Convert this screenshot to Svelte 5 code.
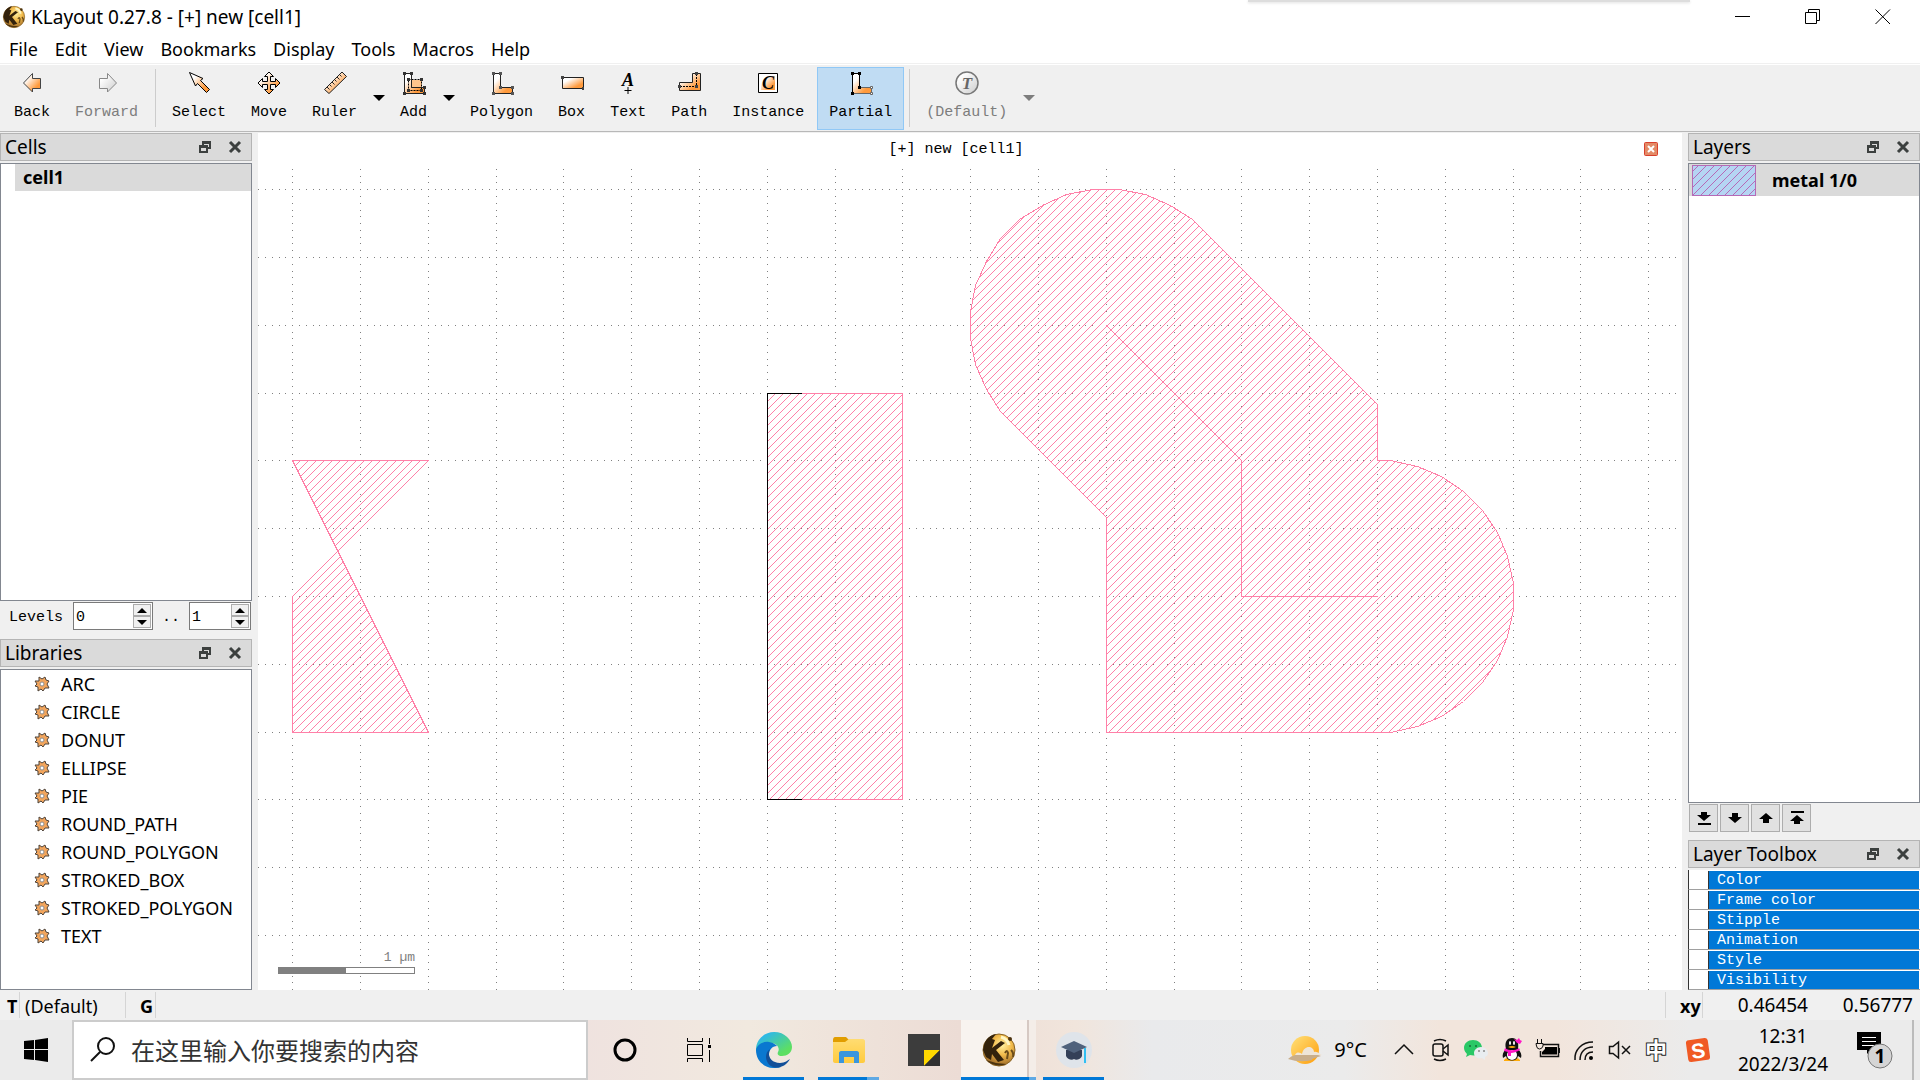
<script>
    const menus = ["File", "Edit", "View", "Bookmarks", "Display", "Tools", "Macros", "Help"];

    const tools = [
        { id: "back", label: "Back" },
        { id: "forward", label: "Forward", disabled: true, separator: true },
        { id: "select", label: "Select" },
        { id: "move", label: "Move" },
        { id: "ruler", label: "Ruler", menu: true },
        { id: "add", label: "Add", menu: true },
        { id: "polygon", label: "Polygon" },
        { id: "box", label: "Box" },
        { id: "text", label: "Text" },
        { id: "path", label: "Path" },
        { id: "instance", label: "Instance" },
        { id: "partial", label: "Partial", active: true, separator: true },
        { id: "technology", label: "(Default)", disabled: true, menu: true },
    ];

    const libraries = [
        "ARC", "CIRCLE", "DONUT", "ELLIPSE", "PIE", "ROUND_PATH",
        "ROUND_POLYGON", "STROKED_BOX", "STROKED_POLYGON", "TEXT",
    ];

    const toolboxSections = ["Color", "Frame color", "Stipple", "Animation", "Style", "Visibility"];
    const layerMoves = ["bottom", "down", "up", "top"];

    const apps = [
        { id: "edge", label: "Microsoft Edge", state: "running" },
        { id: "explorer", label: "File Explorer", state: "running stacked" },
        { id: "notes", label: "Sticky Notes", state: "" },
        { id: "klayout", label: "KLayout", state: "running stacked current" },
        { id: "study", label: "Study", state: "running" },
    ];
    const tray = ["chevron", "camera", "wechat", "qq", "battery", "wifi", "volume", "ime", "sogou"];

    let levelFrom = "0";
    let levelTo = "1";
    let search = "";

    // canvas: one grid unit is 0.5 µm
    let viewWidth = 1424;
    let viewHeight = 826;
    const unit = 67.8;
    const originX = 34.2;
    const originY = 25.2;

    const gx = n => Math.round(originX + n * unit);
    const gy = n => Math.round(originY + n * unit);
    const toPath = points => points.map(([x, y], i) => `${i ? "L" : "M"}${gx(x) + 0.5} ${gy(y) + 0.5}`).join("");

    function gridDots(width, height) {
        let d = "";
        for (let x = gx(0), n = 0; x < width; x = gx(++n)) {
            for (let k = -3; gy(k / 10) < height; k++) d += `M${x} ${gy(k / 10)}h1v1h-1z`;
        }
        for (let y = gy(0), n = 0; y < height; y = gy(++n)) {
            for (let k = -5; gx(k / 10) < width - 4; k++) d += `M${gx(k / 10)} ${y}h1v1h-1z`;
        }
        return d;
    }

    // round path ends are drawn as halves of a 32 sided polygon
    function cap(cx, cy, start) {
        const step = Math.PI / 16;
        const radius = 2 / Math.cos(step / 2);
        return Array.from({ length: 16 }, (_, i) => {
            const a = start + (i + 0.5) * step;
            return [cx + radius * Math.cos(a), cy + radius * Math.sin(a)];
        });
    }

    const bowtie = toPath([[0, 4], [2, 4], [0, 6], [0, 8], [2, 8]]) + "z";
    const bar = toPath([[7, 3], [9, 3], [9, 9], [7, 9]]) + "z";
    const selection = toPath([[7.5, 3], [7, 3], [7, 9], [7.5, 9]]);
    const wire = toPath([
        ...cap(12, 2, Math.PI * 0.75),
        [16, 3.17], [16, 4],
        ...cap(16, 6, -Math.PI / 2),
        [12, 8], [12, 4.83],
    ]) + "z";
    const spine = toPath([[12, 2], [14, 4], [14, 6], [16, 6]]);

    $: dots = gridDots(viewWidth, viewHeight);
</script>

{#snippet toolIcon(id)}
    <svg class="tool-icon" viewBox="0 0 24 24" aria-hidden="true">
        {#if id === "back"}
            <path d="M3.5 12L12.5 2.5V7.5H20.5V17.5H12.5V21z" fill="url(#orange)" stroke="#444" />
        {:else if id === "forward"}
            <path d="M21.5 12L12.5 2.5V7.5H4.5V17.5H12.5V21z" fill="url(#grey)" stroke="#888" />
        {:else if id === "select"}
            <path d="M2.5 1.5L16 7.5L13.5 9.5L22.5 18.5L19.5 21.5L10.5 12.5L8.5 15z" fill="url(#orange)" stroke="#000" />
        {:else if id === "move"}
            <path d="M12 1L16.5 5.5H13.5V10.5H18.5V7.5L23 12L18.5 16.5V13.5H13.5V18.5H16.5L12 23L7.5 18.5H10.5V13.5H5.5V16.5L1 12L5.5 7.5V10.5H10.5V5.5H7.5z" fill="url(#orange)" stroke="#000" />
        {:else if id === "ruler"}
            <path d="M1.5 18.5L19 1L23.5 5.5L6 22.5z" fill="url(#orange)" stroke="#222" />
            <path d="M4 16l2.500 2.500M6.500 13.500l2 2M9 11l2.500 2.500M11.500 8.500l2 2M14 6l2.500 2.500M16.500 3.500l2 2" stroke="#222" />
        {:else if id === "add"}
            <path d="M2.500 2.500H9.500V16.500H22.500V22.500H2.500z" fill="url(#orange)" stroke="#222" />
            <path d="M10 9H20V17H10z" fill="#ffc58c" />
            <path d="M6.500 8.500H19.500V19.500H6.500z" fill="none" stroke="#000" stroke-dasharray="2 1" />
            <path d="M9.500 3V16.500H22" fill="none" stroke="#222" />
            <path d="M1 1h3v3h-3zM8 1h3v3h-3zM21 15h3v3h-3zM21 21h3v3h-3zM1 21h3v3h-3zM5 7h3v3h-3zM18 7h3v3h-3zM5 18h3v3h-3zM18 18h3v3h-3z" fill="#333" />
        {:else if id === "polygon"}
            <path d="M3.500 2.500H10.500V16.500H22.500V22.500H3.500z" fill="url(#orange)" stroke="#222" />
            <path d="M2 1h3v3h-3zM9 1h3v3h-3zM9 15h3v3h-3zM21 15h3v3h-3zM21 21h3v3h-3zM2 21h3v3h-3z" fill="#555" />
        {:else if id === "box"}
            <path d="M2.500 6.500H23.500V17.500H2.500z" fill="url(#orange)" stroke="#222" />
            <path d="M1 5h3v3h-3zM22 16h2v3h-2z" fill="#444" />
        {:else if id === "text"}
            <text class="glyph" x="12" y="15" font-size="18">A</text>
            <path d="M8.500 19.500H15.500M12 16V23" stroke="#000" />
        {:else if id === "path"}
            <path d="M2.500 11.500H15.500V2.500H23.500V19.500H2.500z" fill="url(#orange)" stroke="#222" />
            <path d="M3 15.500H19.500V3" fill="none" stroke="#000" stroke-dasharray="2 1" />
            <path d="M1 14h3v3h-3zM18 14h3v3h-3zM18 1h3v3h-3z" fill="#444" />
        {:else if id === "instance"}
            <path d="M2.500 2.500H21.500V21.500H2.500z" fill="#fff" stroke="#000" />
            <path d="M5 5H19V19H5z" fill="url(#orange)" />
            <text class="glyph" x="12" y="18" font-size="18">C</text>
        {:else if id === "partial"}
            <path d="M3.500 2.500H10.500V16.500H22.500V22.500H3.500z" fill="url(#orange)" stroke="#666" />
            <path d="M3.500 22V2.500H10.500V16.500" fill="none" stroke="#000" />
            <path d="M2 1h3v3h-3zM9 1h3v3h-3zM9 15h3v3h-3zM2 21h3v3h-3z" fill="#000" />
            <path d="M21.500 15.500h2v2h-2zM21.500 21.500h2v2h-2z" fill="#fff" stroke="#666" />
        {:else}
            <circle cx="12" cy="12" r="11" fill="url(#grey)" stroke="#777" stroke-width="1.500" />
            <text class="glyph muted" x="12" y="18" font-size="17">T</text>
        {/if}
    </svg>
{/snippet}

{#snippet klayoutIcon()}
    <svg class="logo" viewBox="0 0 36 36" aria-hidden="true">
        <circle cx="18" cy="18" r="16" fill="url(#gold)" stroke="#8a6424" />
        <path d="M3 13C5 6 10 3 15 2L11 7L14 8L11 16L20 9L24 11L15 18L23 28L17 30L11 22L10 28L5 25L2 18z" fill="#33220c" />
        <path d="M5 28C10 33 18 35 25 32L15 31z" fill="#4c330f" />
        <path d="M24 21Q26 17 27 21L26 27M30 18Q33 21 32 25" fill="none" stroke="#6b4c1a" stroke-width="2" />
        <circle cx="29" cy="7" r="2" fill="#4c330f" />
        <path d="M20 5C24 6 27 9 28 13" fill="none" stroke="#fff6c4" stroke-width="3" />
    </svg>
{/snippet}

{#snippet dockTitle(title)}
    <header class="dock-title">
        <h2>{title}</h2>
        <button type="button" aria-label="Float {title}">
            <svg viewBox="0 0 14 14" width="14" height="14">
                <path d="M5 5V2H12V8H9M5 3H12M2 6H9V12H2zM2 7H9" fill="none" stroke="#3c403f" stroke-width="2" />
            </svg>
        </button>
        <button type="button" aria-label="Close {title}">
            <svg viewBox="0 0 14 14" width="14" height="14">
                <path d="M2 2L12 12M12 2L2 12" stroke="#3c403f" stroke-width="3" />
            </svg>
        </button>
    </header>
{/snippet}

{#snippet appIcon(id)}
    {#if id === "klayout"}
        {@render klayoutIcon()}
    {:else}
        <svg viewBox="0 0 36 36" width="36" height="36" aria-hidden="true">
            {#if id === "edge"}
                <path d="M0 20C-1 8 8 0 18 0C29 0 36 8 36 15C36 21 31 24 26 24C22 24 21 22 22 20C24 17 22 11 14 11C7 11 2 15 0 20z" fill="url(#edgeTop)" />
                <path d="M0 18C1 12 8 9 13 10C19 11 21 14 21 14C16 14 13 18 13 23C13 30 20 34 25 35C12 39 0 31 0 18z" fill="#0a78d0" />
                <path d="M14 17C11 23 14 31 24 31C29 31 32 28 34 27C30 34 23 37 17 35C10 33 7 22 14 17z" fill="#124f98" />
            {:else if id === "explorer"}
                <path d="M2 8C2 6 3 5 4 5H15L18 8L15 11H2z" fill="#e19d00" />
                <path d="M2 10H14L18 7H32C33 7 34 8 34 9V29C34 30 33 31 32 31H4C3 31 2 30 2 29z" fill="url(#folder)" />
                <path d="M8 31V21C8 20 9 19 10 19H26C27 19 28 20 28 21V31H23V25H13V31z" fill="#3a96dd" />
            {:else if id === "notes"}
                <path d="M2 2H34V34H2z" fill="#3c3c3c" />
                <path d="M18 18H34L18 34z" fill="#ffd800" />
                <path d="M34 18V34H18z" fill="#303030" />
            {:else}
                <circle cx="18" cy="18" r="18" fill="#dfe4ea" />
                <path d="M10 18H26V24C25 27 20 29 18 27C16 29 11 27 10 24z" fill="#344058" />
                <path d="M5 15L18 9L31 15L18 21z" fill="#50627c" />
                <path d="M29 16V31" stroke="#31bff2" stroke-width="2" />
            {/if}
        </svg>
    {/if}
{/snippet}

{#snippet trayIcon(id)}
    <svg viewBox="0 0 24 24" width="24" height="24" fill="none" stroke="#111" aria-hidden="true">
        {#if id === "chevron"}
            <path d="M3 16L12 7L21 16" stroke-width="1.500" />
        {:else if id === "camera"}
            <path d="M6 3Q12 0 18 3M6 21Q12 24 18 21" stroke-width="1.500" />
            <rect x="5" y="6" width="10" height="12" rx="2" stroke-width="1.500" />
            <path d="M15 11L20 7V17L15 13" stroke-width="1.500" />
        {:else if id === "wechat"}
            <g stroke="none">
                <path d="M9 2C4 2 0 5 0 10C0 13 2 15 3 16L2 19L6 17C14 19 18 14 18 10C18 5 14 2 9 2z" fill="#2ac866" />
                <circle cx="6" cy="8" r="1" fill="#176c38" />
                <circle cx="12" cy="8" r="1" fill="#176c38" />
                <path d="M17 9C13 9 10 12 10 15C10 19 14 21 18 20L21 22V19C23 18 24 17 24 15C24 12 21 9 17 9z" fill="#e9edf0" />
                <circle cx="15" cy="13" r="1" fill="#888" />
                <circle cx="20" cy="13" r="1" fill="#888" />
            </g>
        {:else if id === "qq"}
            <g stroke="none">
                <path d="M4 22Q7 18 12 22Q17 18 20 22V23H4z" fill="#ffac0b" />
                <path d="M6 11C4 3 8 0 12 0C17 0 19 4 18 11C21 14 22 17 21 20L18 18C17 24 7 24 6 18L3 20C2 17 3 14 6 11z" fill="#111" />
                <ellipse cx="12" cy="17" rx="5" ry="5" fill="#fff" />
                <path d="M5 10C9 13 15 13 19 10L20 12C17 14 13 15 11 15V18H8V14L4 13z" fill="#ff16c5" />
                <path d="M14 1L17 2L19 0L20 2L22 3L20 6L17 5z" fill="#ff16c5" />
                <ellipse cx="10" cy="5" rx="1" ry="2" fill="#fff" />
                <ellipse cx="14" cy="5" rx="1" ry="2" fill="#fff" />
                <path d="M8 9Q12 7 16 9Q12 11 8 9" fill="#ffac0b" />
            </g>
        {:else if id === "battery"}
            <path d="M7 6.500H22.500V18.500H4.500V13" stroke-width="1.500" />
            <path d="M9 9H21V16.500H6V14L9 11z" fill="#000" stroke="none" />
            <path d="M23.500 10V15M1.500 1V5M5.500 1V5M0 5.500H7V8Q6 11 3.500 11Q1 11 .500 8z" />
        {:else if id === "wifi"}
            <path d="M3 22C2 12 10 4 21 4M8 22C8 14 13 9 21 9M13 22C13 17 16 14 21 14" stroke-width="1.500" />
            <circle cx="19" cy="20" r="2" fill="#000" stroke="none" />
        {:else if id === "volume"}
            <path d="M1.500 8.500H5L10.500 4V20L5 15.500H1.500zM14 8L22 16M22 8L14 16" stroke-width="1.500" />
        {:else if id === "ime"}
            <text class="ime" x="12" y="20">中</text>
        {:else}
            <g transform="rotate(-8 12 12)">
                <rect x="1" y="1" width="22" height="22" rx="3" fill="#f05a24" stroke="none" />
                <text class="sogou" x="12" y="20">S</text>
            </g>
        {/if}
    </svg>
{/snippet}

<div class="desktop">
    <div class="popup-edge"></div>
    <header class="title-bar">
        {@render klayoutIcon()}
        <h1>KLayout 0.27.8 - [+] new [cell1]</h1>
        <div class="window-buttons">
            <button type="button" aria-label="Minimize">
                <svg viewBox="0 0 16 16" width="16" height="16"><path d="M0 7.500H15" stroke="#000" /></svg>
            </button>
            <button type="button" aria-label="Restore">
                <svg viewBox="0 0 16 16" width="16" height="16" fill="none" stroke="#000"><path d="M.500 3.500H11.500V14.500H.500zM3.500 3V.500H14.500V11.500H12" /></svg>
            </button>
            <button type="button" aria-label="Close">
                <svg viewBox="0 0 16 16" width="16" height="16"><path d="M.500 .500L15 15M15 .500L.500 15" stroke="#000" /></svg>
            </button>
        </div>
    </header>

    <nav class="menu-bar">
        {#each menus as menu}
            <button type="button">{menu}</button>
        {/each}
    </nav>

    <div class="tool-bar">
        {#each tools as tool}
            <button type="button" class="tool" class:active={tool.active} disabled={tool.disabled}>
                {@render toolIcon(tool.id)}
                <span>{tool.label}</span>
            </button>
            {#if tool.menu}
                <button type="button" class="tool-menu" aria-label="{tool.label} options" disabled={tool.disabled}>
                    <svg viewBox="0 0 12 6" width="12" height="6"><path d="M0 0H12L6 6z" fill="currentColor" /></svg>
                </button>
            {/if}
            {#if tool.separator}
                <i class="separator"></i>
            {/if}
        {/each}
    </div>

    <div class="workspace">
        <aside class="left-docks">
            <section class="cells">
                {@render dockTitle("Cells")}
                <ul class="tree">
                    <li class="cell">cell1</li>
                </ul>
                <div class="levels">
                    <label for="level-from">Levels</label>
                    <div class="spin wide">
                        <input id="level-from" bind:value={levelFrom} />
                        <div class="steps">
                            <button type="button" aria-label="Raise first level"><svg viewBox="0 0 10 5" width="10" height="5"><path d="M0 5H10L5 0z" /></svg></button>
                            <button type="button" aria-label="Lower first level"><svg viewBox="0 0 10 5" width="10" height="5"><path d="M0 0H10L5 5z" /></svg></button>
                        </div>
                    </div>
                    <span class="range">..</span>
                    <div class="spin">
                        <input aria-label="Last level" bind:value={levelTo} />
                        <div class="steps">
                            <button type="button" aria-label="Raise last level"><svg viewBox="0 0 10 5" width="10" height="5"><path d="M0 5H10L5 0z" /></svg></button>
                            <button type="button" aria-label="Lower last level"><svg viewBox="0 0 10 5" width="10" height="5"><path d="M0 0H10L5 5z" /></svg></button>
                        </div>
                    </div>
                </div>
            </section>
            <section class="libraries">
                {@render dockTitle("Libraries")}
                <ul class="tree">
                    {#each libraries as library}
                        <li class="library">
                            <svg viewBox="0 0 16 16" width="16" height="16" aria-hidden="true">
                                <path d="M5 1L8 3L11 1L12 4L15 5L13 8L15 12L11 12L9 15L7 13L4 15L4 11L1 10L3 8L1 5L5 5z" fill="#f2a55c" stroke="#4e443b" />
                                <circle cx="8" cy="8" r="2" fill="#fff" stroke="#8d8d8d" />
                            </svg>
                            {library}
                        </li>
                    {/each}
                </ul>
            </section>
        </aside>

        <main class="view">
            <div class="tab">
                <span>[+] new [cell1]</span>
                <button type="button" aria-label="Close tab">
                    <svg viewBox="0 0 14 14" width="14" height="14">
                        <rect x=".500" y=".500" width="13" height="13" rx="1" fill="#e38a66" stroke="#d8402c" />
                        <path d="M4 4L10 10M10 4L4 10" stroke="#fff" stroke-width="2" />
                    </svg>
                </button>
            </div>
            <div class="canvas" bind:clientWidth={viewWidth} bind:clientHeight={viewHeight}>
                <svg width="100%" height="100%" shape-rendering="crispEdges">
                    <defs>
                        <pattern id="hatch" width="8" height="8" patternUnits="userSpaceOnUse">
                            <path d="M2 0h1v1h-1zM1 1h1v1h-1zM0 2h1v1h-1zM7 3h1v1h-1zM6 4h1v1h-1zM5 5h1v1h-1zM4 6h1v1h-1zM3 7h1v1h-1z" fill="#ff80a8" />
                        </pattern>
                        <linearGradient id="orange" x1="0" y1="0" x2="1" y2="1">
                            <stop offset=".25" stop-color="#fff" />
                            <stop offset=".75" stop-color="#ff9a3c" />
                        </linearGradient>
                        <linearGradient id="grey" x1="0" y1="0" x2="1" y2="1">
                            <stop offset=".2" stop-color="#fff" />
                            <stop offset="1" stop-color="#ccc" />
                        </linearGradient>
                        <radialGradient id="gold" cx=".6" cy=".35" r=".6">
                            <stop offset="0" stop-color="#fff0a0" />
                            <stop offset=".5" stop-color="#f2bb4c" />
                            <stop offset="1" stop-color="#a8742c" />
                        </radialGradient>
                        <linearGradient id="edgeTop" x1="0" y1="0" x2="1" y2="1">
                            <stop offset=".2" stop-color="#2fb9e5" />
                            <stop offset=".8" stop-color="#5ddf62" />
                        </linearGradient>
                        <linearGradient id="folder" x1="0" y1="0" x2="0" y2="1">
                            <stop offset="0" stop-color="#ffdc72" />
                            <stop offset="1" stop-color="#ffcb3e" />
                        </linearGradient>
                        <linearGradient id="sun" x1="0" y1="0" x2="1" y2="1">
                            <stop offset="0" stop-color="#ffe17a" />
                            <stop offset="1" stop-color="#ff9d0a" />
                        </linearGradient>
                    </defs>
                    <path d={dots} fill="#808080" />
                    <g fill="url(#hatch)" stroke="#ff80a8">
                        <path d={bowtie} />
                        <path d={bar} />
                        <path d={wire} />
                        <path d={spine} fill="none" />
                    </g>
                    <path d={selection} fill="none" stroke="#000" />
                </svg>
                <div class="scale">
                    <span>1 µm</span>
                    <div class="scale-bar"></div>
                </div>
            </div>
        </main>

        <aside class="right-docks">
            <section class="layers">
                {@render dockTitle("Layers")}
                <ul class="tree">
                    <li class="layer">
                        <svg viewBox="0 0 64 31" width="64" height="31" shape-rendering="crispEdges">
                            <path d="M.500 .500H63.500V30.500H.500z" fill="#b5d5f3" stroke="#b56ab6" />
                            <path d="M1 6L6 1M1 14L14 1M1 22L22 1M1 30L30 1M8 31L38 1M16 31L46 1M24 31L54 1M32 31L62 1M40 31L63 8M48 31L63 16M56 31L63 24" stroke="#b56ab6" />
                        </svg>
                        metal 1/0
                    </li>
                </ul>
                <div class="layer-moves">
                    {#each layerMoves as move}
                        <button type="button" aria-label="Move layer {move}">
                            <svg viewBox="0 0 14 14" width="14" height="14">
                                {#if move === "bottom"}
                                    <path d="M4 1H10V4H14L7 10L0 4H4zM1 12H14V14H1z" />
                                {:else if move === "down"}
                                    <path d="M4 2H10V6H14L7 12L0 6H4z" />
                                {:else if move === "up"}
                                    <path d="M4 12H10V8H14L7 2L0 8H4z" />
                                {:else}
                                    <path d="M4 13H10V10H14L7 4L0 10H4zM1 0H14V2H1z" />
                                {/if}
                            </svg>
                        </button>
                    {/each}
                </div>
            </section>
            <section class="toolbox">
                {@render dockTitle("Layer Toolbox")}
                {#each toolboxSections as section}
                    <button type="button" class="toolbox-section"><span>{section}</span></button>
                {/each}
            </section>
        </aside>
    </div>

    <footer class="status-bar">
        <b class="technology">T</b>
        <span class="technology-name">(Default)</span>
        <b class="grid-flag">G</b>
        <b class="xy">xy</b>
        <span class="coordinate">0.46454</span>
        <span class="coordinate">0.56777</span>
    </footer>

    <div class="task-bar">
        <button type="button" class="start" aria-label="Start">
            <svg viewBox="0 0 24 24" width="24" height="24"><path d="M0 3L10 2V11H0zM11 2L24 0V11H11zM0 12H10V22L0 21zM11 12H24V24L11 22z" /></svg>
        </button>
        <label class="search">
            <svg viewBox="0 0 26 26" width="26" height="26" fill="none" stroke="#111" stroke-width="2">
                <circle cx="16" cy="9" r="8" />
                <path d="M10 15L1 24" />
            </svg>
            <input type="text" aria-label="Search" placeholder="在这里输入你要搜索的内容" bind:value={search} />
        </label>
        <button type="button" class="shell-button" aria-label="Cortana">
            <svg viewBox="0 0 26 26" width="26" height="26"><circle cx="13" cy="13" r="10" fill="none" stroke="#000" stroke-width="3" /></svg>
        </button>
        <button type="button" class="shell-button" aria-label="Task view">
            <svg viewBox="0 0 26 26" width="26" height="26" fill="none" stroke="#000">
                <path d="M1.500 1V4.500H16.500V1M1.500 25V21.500H16.500V25M1.500 7.500H16.500V18.500H1.500zM23.500 1V7M23.500 13V25" />
                <path d="M22 8H25V11H22z" fill="#000" stroke="none" />
            </svg>
        </button>
        {#each apps as app}
            <button type="button" class="app {app.state}" aria-label={app.label}>{@render appIcon(app.id)}</button>
        {/each}

        <div class="tray">
            <button type="button" class="weather">
                <svg viewBox="0 0 34 30" width="34" height="30" aria-hidden="true">
                    <circle cx="17" cy="15" r="14" fill="url(#sun)" />
                    <path d="M7 20C9 16 13 18 14 19C16 9 26 11 26 17C30 16 31 19 34 20Q26 22 19 21Q8 22 7 20z" fill="#eee5d8" />
                    <path d="M0 24Q3 21 7 20H30L33 21Q22 24 24 25Q12 28 0 24z" fill="#c8ae8c" />
                </svg>
                9°C
            </button>
            {#each tray as item}
                <button type="button" class="tray-button {item}" aria-label={item}>{@render trayIcon(item)}</button>
            {/each}
            <button type="button" class="clock">
                <span>12:31</span>
                <span>2022/3/24</span>
            </button>
            <button type="button" class="notifications" aria-label="Notifications">
                <svg viewBox="0 0 40 40" width="40" height="40">
                    <path d="M2 2H26V20H16L12 24V20H2z" />
                    <path d="M7 7.500H21M7 11.500H21M7 15.500H21" stroke="#fff" />
                    <circle cx="25" cy="26" r="12" fill="#d5d5d5" stroke="#777" />
                    <text x="25" y="33">1</text>
                </svg>
            </button>
        </div>
    </div>
</div>

<style>
    :global(body) {
        margin: 0;
    }

    .desktop {
        position: relative;
        display: flex;
        flex-direction: column;
        height: 100vh;
        background: #f0f0f0;
        color: #000;
        font: 18px/28px "Noto Sans", "Noto Sans CJK SC", sans-serif;
        overflow: hidden;
    }

    button,
    input {
        margin: 0;
        padding: 0;
        border: 0;
        background: none;
        color: inherit;
        font: inherit;
    }

    svg {
        display: block;
        flex: none;
    }

    h1,
    h2 {
        margin: 0;
        font: inherit;
        font-size: 19px;
    }

    ul {
        margin: 0;
        padding: 0;
        list-style: none;
    }

    .popup-edge {
        position: absolute;
        top: 0;
        left: 65%;
        right: 12%;
        height: 2px;
        background: #ddd;
        box-shadow: 0 1px 3px #ddd;
    }

    .title-bar {
        display: flex;
        align-items: center;
        gap: 5px;
        height: 34px;
        padding: 0 2px;
        background: #fff;
    }

    .logo {
        width: 24px;
        height: 24px;
    }

    .window-buttons {
        display: flex;
        margin-left: auto;
    }

    .window-buttons button {
        display: flex;
        justify-content: center;
        width: 70px;
    }

    .menu-bar {
        display: flex;
        gap: 1px;
        height: 28px;
        padding: 1px 1px 0;
        background: #fff;
        border-bottom: 1px solid #f0f0f0;
    }

    .menu-bar button {
        padding: 0 8px;
    }

    .tool-bar {
        display: flex;
        align-items: center;
        gap: 1px;
        height: 66px;
        padding-left: 2px;
        border-top: 1px solid #fff;
        border-bottom: 1px solid #b8b8b8;
        font-family: "Liberation Mono", monospace;
        font-size: 15px;
        line-height: 20px;
    }

    .tool {
        display: flex;
        flex-direction: column;
        align-items: center;
        gap: 8px;
        height: 63px;
        padding: 3px 11px;
        border: 1px solid transparent;
        box-sizing: border-box;
    }

    .tool.active {
        background: #c0dcf3;
        border-color: #90c8f6;
    }

    .tool:disabled,
    .tool-menu:disabled {
        color: #7d7d7d;
    }

    .tool-icon {
        width: 24px;
        height: 24px;
    }

    .glyph {
        font-family: "Liberation Serif", serif;
        font-weight: bold;
        font-style: italic;
        text-anchor: middle;
    }

    .glyph.muted {
        fill: #666;
    }

    .tool-menu {
        display: flex;
        justify-content: center;
        width: 17px;
    }

    .separator {
        width: 1px;
        height: 58px;
        margin: 0 3px 0 4px;
        background: #ccc;
    }

    .workspace {
        display: flex;
        flex: 1;
        min-height: 0;
        padding-top: 1px;
    }

    .left-docks,
    .right-docks {
        display: flex;
        flex-direction: column;
        gap: 8px;
        flex: none;
    }

    .left-docks {
        width: 252px;
        margin-right: 6px;
    }

    .right-docks {
        width: 232px;
        margin-left: 6px;
    }

    section {
        display: flex;
        flex-direction: column;
    }

    .cells {
        flex: 499;
    }

    .libraries {
        flex: 351;
    }

    .layers {
        flex: 1;
    }

    .dock-title {
        display: flex;
        align-items: center;
        gap: 16px;
        height: 26px;
        margin-bottom: 2px;
        padding: 0 9px 0 4px;
        background: #dadada;
        border: 1px solid #b4b4b4;
    }

    .dock-title h2 {
        margin-right: auto;
    }

    .tree {
        flex: 1;
        background: #fff;
        border: 1px solid #828790;
    }

    .cell {
        height: 27px;
        margin-left: 14px;
        padding-left: 8px;
        background: #dadada;
        font-weight: bold;
        line-height: 27px;
    }

    .library {
        display: flex;
        align-items: center;
        gap: 11px;
        padding-left: 33px;
    }

    .levels {
        display: flex;
        align-items: center;
        height: 30px;
        padding: 0 1px 0 9px;
        font-family: "Liberation Mono", monospace;
        font-size: 15px;
    }

    .levels label,
    .range,
    .spin input {
        padding-top: 3px;
    }

    .spin {
        display: flex;
        width: 60px;
        height: 26px;
        background: #fff;
        border: 1px solid #7a7a7a;
    }

    .spin.wide {
        width: 78px;
        margin-left: 10px;
    }

    .spin input {
        flex: 1;
        min-width: 0;
        padding-left: 2px;
    }

    .steps {
        display: flex;
        flex-direction: column;
        padding: 1px;
    }

    .steps button {
        display: grid;
        place-items: center;
        flex: 1;
        width: 18px;
        background: #f0f0f0;
        border: 1px solid #acacac;
    }

    .range {
        flex: 1;
        text-align: center;
    }

    .view {
        display: flex;
        flex-direction: column;
        flex: 1;
        min-width: 0;
        background: #fff;
    }

    .tab {
        display: flex;
        align-items: center;
        height: 31px;
        padding: 0 24px 0 10px;
        font-family: "Liberation Mono", monospace;
        font-size: 15px;
    }

    .tab span {
        flex: 1;
        padding-top: 2px;
        text-align: center;
    }

    .canvas {
        position: relative;
        flex: 1;
        min-height: 0;
    }

    .canvas > svg {
        position: absolute;
        inset: 0;
    }

    .scale {
        position: absolute;
        left: 20px;
        bottom: 16px;
        width: 137px;
        color: #808080;
        font: 13px/18px "Liberation Mono", monospace;
        text-align: right;
    }

    .scale-bar {
        height: 5px;
        border: 1px solid #808080;
        background: linear-gradient(to right, #808080 50%, #fff 50%);
    }

    .layer {
        display: flex;
        align-items: center;
        gap: 16px;
        height: 32px;
        padding-left: 3px;
        background: #dadada;
        font-weight: bold;
    }

    .layer-moves {
        display: flex;
        gap: 2px;
        padding: 1px 1px 0;
    }

    .layer-moves button {
        display: grid;
        place-items: center;
        width: 29px;
        height: 28px;
        background: #e1e1e1;
        border: 1px solid #adadad;
    }

    .toolbox-section {
        height: 20px;
        padding: 1px 1px 0 19px;
        background: #fff;
        border-left: 1px solid #333;
        border-bottom: 1px solid #a0a0a0;
        color: #fff;
        font-family: "Liberation Mono", monospace;
        font-size: 15px;
        line-height: 20px;
        text-align: left;
    }

    .toolbox-section span {
        display: block;
        height: 18px;
        padding-left: 8px;
        background: #0078d7;
        border-left: 1px solid #333;
    }

    .status-bar {
        display: flex;
        align-items: center;
        height: 30px;
        flex: none;
    }

    .status-bar b,
    .technology-name {
        height: 26px;
        line-height: 28px;
        border-right: 1px solid #d5d5d5;
    }

    .technology {
        width: 12px;
        padding-left: 7px;
    }

    .technology-name {
        width: 100px;
        padding-left: 5px;
    }

    .grid-flag {
        width: 15px;
        padding-left: 14px;
    }

    .xy {
        margin-left: auto;
        width: 22px;
        padding-left: 14px;
        border-left: 1px solid #d5d5d5;
    }

    .coordinate {
        width: 105px;
        font-size: 19px;
        text-align: right;
    }

    .coordinate:last-child {
        padding-right: 7px;
    }

    .task-bar {
        display: flex;
        height: 60px;
        flex: none;
        background: linear-gradient(to right, #ebebeb 4%, #efe2df 30%, #f1e9df 39%, #ecdcd5 50%, #f1e5dc 56%, #e9eaec 60%, #ebebeb 70%, #f2e5dc 75%, #f2e5dc 81%, #ebebeb 88%);
    }

    .task-bar button {
        display: flex;
        align-items: center;
        justify-content: center;
    }

    .start {
        width: 72px;
    }

    .search {
        display: flex;
        align-items: center;
        gap: 15px;
        width: 516px;
        padding-left: 16px;
        background: #fff;
        border: 2px solid #ccc;
        box-sizing: border-box;
    }

    .search input {
        flex: 1;
        min-width: 0;
        font-family: "Noto Sans CJK SC", sans-serif;
        font-size: 24px;
        outline: none;
    }

    .search input::placeholder {
        color: #333;
        opacity: 1;
    }

    .shell-button {
        width: 74px;
    }

    .app {
        position: relative;
        width: 75px;
    }

    .app .logo {
        width: 36px;
        height: 36px;
    }

    .app.current {
        background: linear-gradient(to right, #f8f3ef 66px, #d6c9c3 66px, #d6c9c3 68px, #f4ede8 68px);
    }

    .app.running::after {
        content: "";
        position: absolute;
        left: 7px;
        right: 7px;
        bottom: 0;
        height: 3px;
        background: #0078d7;
    }

    .app.stacked::after {
        background: linear-gradient(to right, #0078d7 80%, #5fa9e4 80%);
    }

    .app.current::after {
        left: 0;
        right: 0;
        background: linear-gradient(to right, #0078d7 68px, #5fa9e4 68px);
    }

    .tray {
        display: flex;
        margin-left: auto;
        padding-right: 6px;
    }

    .tray::after {
        content: "";
        width: 2px;
        background: #bbb;
    }

    .weather {
        gap: 12px;
        margin-right: 19px;
        font-size: 20px;
    }

    .tray-button {
        width: 36px;
    }

    .tray-button svg {
        overflow: visible;
    }

    .tray-button.sogou {
        margin: 0 12px 0 6px;
    }

    .ime {
        fill: #fff;
        stroke: #222;
        stroke-width: 2;
        paint-order: stroke;
        font: bold 22px "Noto Sans CJK SC", sans-serif;
        text-anchor: middle;
    }

    text.sogou {
        fill: #fff;
        stroke: none;
        font: bold 21px "Liberation Sans", sans-serif;
        text-anchor: middle;
    }

    .task-bar .clock {
        flex-direction: column;
        width: 110px;
        font-size: 19px;
        line-height: 28px;
    }

    .notifications {
        width: 74px;
    }

    .notifications text {
        font: bold 19px "Noto Sans", sans-serif;
        text-anchor: middle;
    }
</style>
